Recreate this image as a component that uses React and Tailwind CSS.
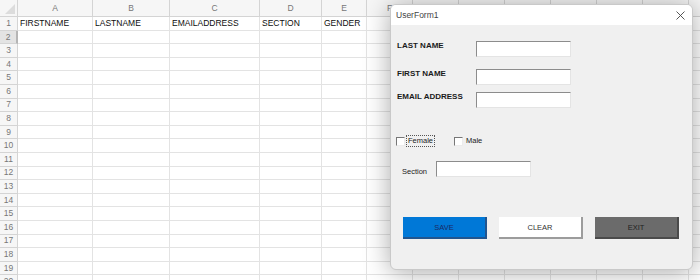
const letters = ["A", "B", "C", "D", "E", "F", "G", "H", "I", "J", "K", "L", "M"]
const headings = ["FIRSTNAME", "LASTNAME", "EMAILADDRESS", "SECTION", "GENDER"]
const rows = Array.from({ length: 20 }, (_, i) => i + 1)

function Sheet() {
  return (
    <div
      className="grid grid-cols-[18px_75px_77px_90px_62px_45px_repeat(8,46px)] grid-rows-[17px_repeat(20,13.6px)] w-[700px] h-[280px] overflow-hidden bg-white text-[8.5px] font-['Liberation_Sans',sans-serif]"
    >
      <div className="bg-[#f6f6f6] border-r border-b border-[#d4d4d4] relative">
        <div className="absolute right-[2px] bottom-[2px] w-0 h-0 border-l-[10px] border-l-transparent border-b-[10px] border-b-[#dcdcdc]" />
      </div>
      {letters.map((l) => (
        <div
          key={l}
          className="bg-[#f6f6f6] border-r border-b border-[#d4d4d4] flex items-center justify-center text-[#777]"
        >
          {l}
        </div>
      ))}
      {rows.map((r) => (
        <Row key={r} r={r} />
      ))}
    </div>
  )
}

function Row({ r }) {
  return (
    <>
      <div
        className={
          r === 2
            ? "bg-[#e3e3e3] border-r-2 border-b border-r-[#b5b5b5] border-b-[#d4d4d4] flex items-center justify-center text-[#777]"
            : "bg-[#f6f6f6] border-r border-b border-[#d4d4d4] flex items-center justify-center text-[#777]"
        }
      >
        {r}
      </div>
      {letters.map((l, i) => (
        <div
          key={l}
          className="border-r border-b border-[#e3e3e3] flex items-center pl-[2px] text-[#0d0d0d] whitespace-nowrap overflow-hidden"
        >
          {r === 1 && headings[i]}
        </div>
      ))}
    </>
  )
}

function TextBox() {
  return (
    <div className="w-[95px] h-[16px] bg-white border-t border-l border-t-[#8c8c8c] border-l-[#8c8c8c] border-r border-b border-r-[#e4e4e4] border-b-[#e4e4e4]" />
  )
}

function Check() {
  return (
    <div className="w-[9px] h-[9px] bg-white border-t border-l border-[#777] border-r-[#ececec] border-b-[#ececec] border-r border-b" />
  )
}

function Field({ label, className }) {
  return (
    <div className={`flex items-start ${className}`}>
      <div className="w-[79px] text-[8px] leading-[10px] font-bold text-[#1b1b1b]">{label}</div>
      <TextBox />
    </div>
  )
}

function UserForm() {
  return (
    <div className="absolute left-[390px] top-[4px] w-[303px] h-[266px] rounded-[6px] bg-[#f0f0f0] border border-[#c9c9c9] shadow-[0_2px_26px_rgba(0,0,0,0.34)] overflow-hidden flex flex-col font-['Liberation_Sans',sans-serif]">
      <div className="h-[20px] bg-white flex items-center justify-between pl-[5px] pr-[7px] shrink-0">
        <span className="text-[8.5px] text-[#444]">UserForm1</span>
        <svg width="9" height="9" viewBox="0 0 9 9" className="text-[#444]">
          <path d="M0.5 0.5 L8.5 8.5 M8.5 0.5 L0.5 8.5" stroke="currentColor" strokeWidth="0.9" />
        </svg>
      </div>
      <div className="flex flex-col pl-[6px] pt-[16px]">
        <Field label="LAST NAME" />
        <Field label="FIRST NAME" className="mt-[12px]" />
        <Field label="EMAIL ADDRESS" className="mt-[7px]" />

        <div className="flex items-center mt-[27px] text-[7.5px] text-[#222] -ml-[1px]">
          <Check />
          <span className="ml-[1px] px-[1px] leading-[10px] border border-dotted border-[#555]">Female</span>
          <div className="ml-[19px]">
            <Check />
          </div>
          <span className="ml-[3px]">Male</span>
        </div>

        <div className="flex items-center mt-[14px] pl-[5px]">
          <span className="w-[34px] text-[7.5px] text-[#222] pt-[5px]">Section</span>
          <TextBox />
        </div>

        <div className="flex mt-[40px] pl-[6px] gap-[12px] text-[7.5px]">
          <div className="w-[84px] h-[22px] bg-[#0078d7] border-r-2 border-b-2 border-[#21558f] flex items-center justify-center text-[#1a2b66]">
            SAVE
          </div>
          <div className="w-[84px] h-[22px] bg-white border-r-2 border-b-2 border-[#9c9c9c] flex items-center justify-center text-[#333]">
            CLEAR
          </div>
          <div className="w-[84px] h-[22px] bg-[#6b6b6b] border-r-2 border-b-2 border-[#4a4a4a] flex items-center justify-center text-[#222]">
            EXIT
          </div>
        </div>
      </div>
    </div>
  )
}

export default function App() {
  return (
    <div className="relative w-[700px] h-[280px] overflow-hidden bg-white">
      <Sheet />
      <UserForm />
    </div>
  )
}
